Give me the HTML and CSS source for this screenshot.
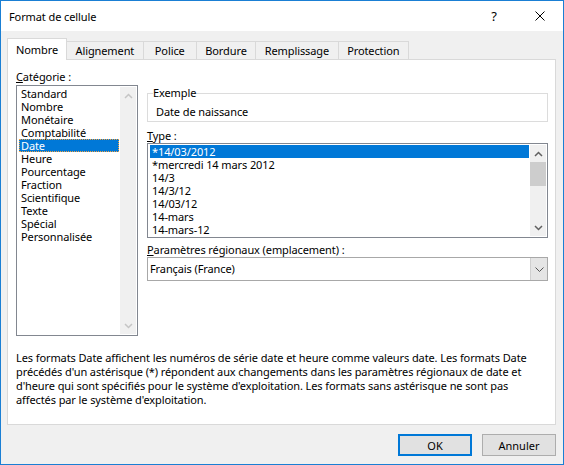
FILE: index.html
```html
<!DOCTYPE html>
<html lang="fr">
<head>
<meta charset="utf-8">
<title>Format de cellule</title>
<link rel="stylesheet" href="styles.css">
</head>
<body>
<div class="window">
  <header class="titlebar">
    <span class="title">Format de cellule</span>
    <span class="caption-btn help">?</span>
    <span class="caption-btn close">
      <svg width="10" height="10" viewBox="0 0 10 10"><path d="M0.5 0.5L9.5 9.5M9.5 0.5L0.5 9.5" stroke="#000" stroke-width="1" fill="none"/></svg>
    </span>
  </header>

  <nav class="tabs">
    <div class="tab active">Nombre</div>
    <div class="tab">Alignement</div>
    <div class="tab">Police</div>
    <div class="tab">Bordure</div>
    <div class="tab">Remplissage</div>
    <div class="tab">Protection</div>
  </nav>

  <main class="panel">
    <div class="columns">
      <section class="col-left">
        <div class="label"><u>C</u>atégorie :</div>
        <div class="listbox cat-list">
          <ul class="rows">
            <li>Standard</li>
            <li>Nombre</li>
            <li>Monétaire</li>
            <li>Comptabilité</li>
            <li class="selected focus">Date</li>
            <li>Heure</li>
            <li>Pourcentage</li>
            <li>Fraction</li>
            <li>Scientifique</li>
            <li>Texte</li>
            <li>Spécial</li>
            <li>Personnalisée</li>
          </ul>
          <div class="vscroll disabled">
            <span class="arrow"><svg width="9" height="6" viewBox="0 0 9 6"><path d="M1 5L4.5 1.5L8 5" fill="none" stroke="currentColor" stroke-width="1.5"/></svg></span>
            <span class="track"></span>
            <span class="arrow"><svg width="9" height="6" viewBox="0 0 9 6"><path d="M1 1L4.5 4.5L8 1" fill="none" stroke="currentColor" stroke-width="1.5"/></svg></span>
          </div>
        </div>
      </section>

      <section class="col-right">
        <fieldset class="sample">
          <legend>Exemple</legend>
          <div class="sample-value">Date de naissance</div>
        </fieldset>

        <div class="label label-type"><u>T</u>ype :</div>
        <div class="listbox type-list">
          <ul class="rows">
            <li class="selected">*14/03/2012</li>
            <li>*mercredi 14 mars 2012</li>
            <li>14/3</li>
            <li>14/3/12</li>
            <li>14/03/12</li>
            <li>14-mars</li>
            <li>14-mars-12</li>
          </ul>
          <div class="vscroll">
            <span class="arrow"><svg width="9" height="6" viewBox="0 0 9 6"><path d="M1 5L4.5 1.5L8 5" fill="none" stroke="currentColor" stroke-width="1.5"/></svg></span>
            <span class="thumb"></span>
            <span class="track"></span>
            <span class="arrow"><svg width="9" height="6" viewBox="0 0 9 6"><path d="M1 1L4.5 4.5L8 1" fill="none" stroke="currentColor" stroke-width="1.5"/></svg></span>
          </div>
        </div>

        <div class="label label-locale"><u>P</u>aramètres régionaux (emplacement) :</div>
        <div class="combo">
          <span class="combo-value">Français (France)</span>
          <span class="combo-btn"><svg width="9" height="5" viewBox="0 0 9 5"><path d="M0.5 0.5L4.5 4.5L8.5 0.5" fill="none" stroke="#555" stroke-width="1"/></svg></span>
        </div>
      </section>
    </div>

    <p class="desc">Les formats Date affichent les numéros de série date et heure comme valeurs date. Les formats Date<br>précédés d'un astérisque (*) répondent aux changements dans les paramètres régionaux de date et<br>d'heure qui sont spécifiés pour le système d'exploitation. Les formats sans astérisque ne sont pas<br>affectés par le système d'exploitation.</p>
  </main>

  <footer class="buttons">
    <button class="btn default">OK</button>
    <button class="btn">Annuler</button>
  </footer>
</div>
</body>
</html>
```

FILE: styles.css
```css
* { box-sizing: border-box; }

html, body {
  margin: 0;
  padding: 0;
}

body {
  width: 564px;
  height: 465px;
  background: #f0f0f0;
  font-family: "Noto Sans", "Open Sans", sans-serif;
  font-size: 11px;
  letter-spacing: -0.1px;
  color: #000;
}

.window {
  width: 564px;
  height: 465px;
  border: 1px solid #1a7fd4;
  background: #f0f0f0;
  display: flex;
  flex-direction: column;
}

/* caption */
.titlebar {
  height: 30px;
  flex: none;
  background: #fff;
  display: flex;
  align-items: center;
}

.title {
  flex: 1;
  padding-left: 8px;
  font-size: 11px;
}

.caption-btn {
  width: 46px;
  height: 30px;
  display: flex;
  align-items: center;
  justify-content: center;
}

.help {
  font-size: 13px;
}

/* tab strip */
.tabs {
  height: 28px;
  flex: none;
  display: flex;
  align-items: flex-end;
  padding-left: 6px;
  position: relative;
  z-index: 1;
}

.tab {
  height: 18px;
  min-width: 54px;
  padding: 0 8.5px;
  margin-left: -1px;
  border: 1px solid #d9d9d9;
  border-bottom: none;
  background: #f0f0f0;
  line-height: 17px;
  text-align: center;
  white-space: nowrap;
}

.tab.active {
  height: 22px;
  margin-left: 0;
  margin-bottom: -1px;
  padding: 2px 8px 0;
  background: #fff;
  line-height: 17px;
}

/* page */
.panel {
  flex: none;
  height: 366px;
  margin: 0 7px 0 6px;
  border: 1px solid #d9d9d9;
  background: #fff;
  padding: 9px 7px 0 8px;
}

.columns {
  display: grid;
  grid-template-columns: 122px 401px;
  column-gap: 9px;
  align-items: start;
}

.label {
  line-height: 15px;
  margin-bottom: 1px;
  white-space: nowrap;
}

.label u {
  text-decoration: underline;
  text-underline-offset: 1px;
}

.label-type { margin-top: 6px; margin-bottom: 0; }
.label-locale { margin-top: 4px; margin-bottom: 0; }

/* list boxes */
.listbox {
  display: flex;
  border: 1px solid #828790;
  padding: 1px;
  background: #fff;
}

.cat-list { height: 251px; }
.type-list { height: 95px; }

.rows {
  flex: 1;
  list-style: none;
  margin: 0;
  padding: 0;
  min-width: 0;
}

.rows li {
  height: 13px;
  line-height: 13px;
  margin: 0 1px;
  padding-left: 2px;
  white-space: nowrap;
}

.rows li.selected {
  background: #0078d7;
  color: #fff;
}

.rows li.focus {
  outline: 1px dotted #f2a241;
  outline-offset: -1px;
}

.vscroll {
  width: 16px;
  flex: none;
  background: #f0f0f0;
  display: flex;
  flex-direction: column;
  color: #606060;
}

.vscroll.disabled { color: #c5c5c5; }

.vscroll .arrow {
  height: 17px;
  flex: none;
  display: flex;
  align-items: center;
  justify-content: center;
}

.vscroll .thumb {
  height: 24px;
  flex: none;
  background: #cdcdcd;
}

.vscroll .track { flex: 1; }

/* sample group */
.sample {
  margin: 17px 0 0;
  padding: 0 0 2px 5px;
  border: 1px solid #dcdcdc;
  min-width: 0;
}

.sample legend {
  padding: 0;
  line-height: 14px;
}

.sample-value {
  margin-top: 4px;
  padding-left: 3px;
  line-height: 15px;
}

/* locale combo */
.combo {
  height: 24px;
  display: flex;
  border: 1px solid #a8a8a8;
  background: #fff;
}

.combo-value {
  flex: 1;
  padding-left: 2px;
  line-height: 22px;
}

.combo-btn {
  width: 17px;
  background: #e5e5e5;
  border-left: 1px solid #cfcfcf;
  display: flex;
  align-items: center;
  justify-content: center;
}

.desc {
  margin: 15px 0 0;
  line-height: 14px;
  white-space: nowrap;
}

/* dialog buttons */
.buttons {
  flex: none;
  display: flex;
  justify-content: flex-end;
  gap: 10px;
  padding: 9px 7px 0 0;
}

.btn {
  width: 74px;
  height: 22px;
  margin: 0;
  padding: 0;
  font-family: inherit;
  font-size: 11px;
  color: #000;
  background: #e1e1e1;
  border: 1px solid #adadad;
}

.btn.default {
  border: 2px solid #0078d7;
}
```
